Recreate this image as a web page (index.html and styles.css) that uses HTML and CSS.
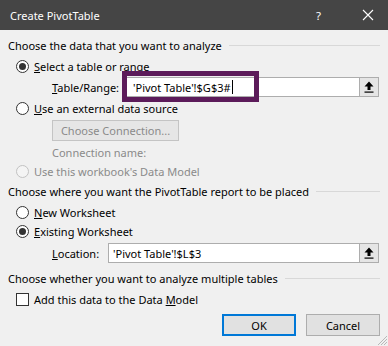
FILE: index.html
```html
<!DOCTYPE html>
<html>
<head>
<meta charset="utf-8">
<link rel="stylesheet" href="styles.css">
</head>
<body>
<div class="dialog">
  <div class="titlebar">
    <span class="title">Create PivotTable</span>
    <span class="help">?</span>
    <span class="close">
      <svg width="12" height="12" viewBox="0 0 12 12"><path d="M1 1L11 11M11 1L1 11" stroke="#fff" stroke-width="1.1" fill="none"/></svg>
    </span>
  </div>
  <div class="content">
    <div class="row header h1"><span>Choose the data that you want to analyze</span><span class="sep"></span></div>
    <div class="row radio-row r1"><span class="radio checked"></span><span><u>S</u>elect a table or range</span></div>
    <div class="row field-row tr">
      <span class="label range-label"><u>T</u>able/Range:</span>
      <div class="input range-input">
        <span class="value">'Pivot Table'!$G$3#<span class="caret"></span></span>
        <span class="picker"><svg width="10" height="12" viewBox="0 0 10 12"><path d="M5 0.5L9.5 5.5H6.5V9H3.5V5.5H0.5Z" fill="#000"/><rect x="0.5" y="10.5" width="9" height="1.2" fill="#000"/></svg></span>
        <span class="highlight"></span>
      </div>
    </div>
    <div class="row radio-row r2"><span class="radio"></span><span><u>U</u>se an external data source</span></div>
    <div class="row btn-row"><span class="conn-btn">Choose Connection...</span></div>
    <div class="row conn-name">Connection name:</div>
    <div class="row radio-row r3 disabled"><span class="radio"></span><span>Use this workbook's Data Model</span></div>
    <div class="row header h2"><span>Choose where you want the PivotTable report to be placed</span><span class="sep"></span></div>
    <div class="row radio-row r4"><span class="radio"></span><span><u>N</u>ew Worksheet</span></div>
    <div class="row radio-row r5"><span class="radio checked"></span><span><u>E</u>xisting Worksheet</span></div>
    <div class="row field-row loc">
      <span class="label loc-label"><u>L</u>ocation:</span>
      <div class="input loc-input">
        <span class="value">'Pivot Table'!$L$3</span>
        <span class="picker"><svg width="10" height="12" viewBox="0 0 10 12"><path d="M5 0.5L9.5 5.5H6.5V9H3.5V5.5H0.5Z" fill="#000"/><rect x="0.5" y="10.5" width="9" height="1.2" fill="#000"/></svg></span>
      </div>
    </div>
    <div class="row header h3"><span>Choose whether you want to analyze multiple tables</span><span class="sep"></span></div>
    <div class="row radio-row r6"><span class="checkbox"></span><span>Add this data to the Data <u>M</u>odel</span></div>
    <div class="row actions">
      <span class="btn ok">OK</span>
      <span class="btn cancel">Cancel</span>
    </div>
  </div>
  <svg class="grip" width="10" height="10" viewBox="0 0 10 10"><path d="M9 3L3 9M9 6L6 9M9 0L0 9" stroke="#b8b8b8" stroke-width="1" fill="none"/></svg>
</div>
</body>
</html>
```
FILE: styles.css
```css
html, body {
  margin: 0;
  padding: 0;
}
body {
  width: 388px;
  height: 346px;
  overflow: hidden;
  background: #f0f0f0;
  font-family: "Noto Sans", "Liberation Sans", sans-serif;
  font-size: 11px;
  color: #000;
}
.dialog {
  position: relative;
  width: 388px;
  height: 346px;
  background: #f0f0f0;
}
.titlebar {
  height: 30px;
  background: #454545;
  color: #fff;
  display: flex;
  align-items: center;
  padding-left: 10px;
  font-size: 11px;
}
.title {
  flex: 1;
}
.help {
  width: 10px;
  margin-right: 36px;
  font-size: 11.5px;
}
.close {
  width: 26px;
  display: flex;
  align-items: center;
}
.content {
  padding: 0 8px;
  display: flex;
  flex-direction: column;
}
.row {
  display: flex;
  align-items: center;
  height: 18px;
  white-space: nowrap;
}
.header .sep {
  flex: 1;
  height: 1px;
  background: #d8d8d8;
  margin-left: 7px;
}
.h1 { margin-top: 6px; }
.r1 { margin-top: 3px; }
.tr { margin-top: 2px; height: 20px; }
.r2 { margin-top: 2px; }
.btn-row { margin-top: 3px; height: 21px; padding-left: 44px; }
.conn-name { margin-top: 2px; padding-left: 44px; color: #8a8a8a; }
.r3 { margin-top: 1px; }
.h2 { margin-top: 2px; }
.r4 { margin-top: 3px; }
.r5 { margin-top: 1px; }
.loc { margin-top: 3px; height: 20px; }
.h3 { margin-top: 6px; }
.r6 { margin-top: 3px; }
.actions { margin-top: 6px; height: 22px; justify-content: flex-end; gap: 10px; }

.radio-row {
  padding-left: 8px;
}
.radio {
  width: 11px;
  height: 11px;
  border: 1px solid #333;
  border-radius: 50%;
  background: #fff;
  margin-right: 5px;
  position: relative;
  flex: none;
}
.radio.checked::after {
  content: "";
  position: absolute;
  left: 2px;
  top: 2px;
  width: 7px;
  height: 7px;
  border-radius: 50%;
  background: #333;
}
.disabled {
  color: #8a8a8a;
}
.disabled .radio {
  border-color: #c2c2c2;
  background: #f4f4f4;
}
.checkbox {
  width: 11px;
  height: 11px;
  border: 1px solid #333;
  background: #fff;
  margin-right: 5px;
  flex: none;
}
.field-row {
  padding-left: 44px;
}
.label {
  flex: none;
}
.range-label { width: 72px; }
.loc-label { width: 56px; }
.input {
  position: relative;
  height: 18px;
  border: 1px solid #adadad;
  background: #fff;
  display: flex;
  align-items: center;
  box-sizing: content-box;
}
.range-input {
  width: 253px;
}
.loc-input {
  width: 269px;
}
.value {
  flex: 1;
  padding-left: 8px;
  display: flex;
  align-items: center;
}
.loc-input .value {
  padding-left: 4px;
}
.caret {
  display: inline-block;
  width: 1px;
  height: 14px;
  background: #000;
  margin-left: 1px;
}
.picker {
  width: 19px;
  height: 18px;
  background: #e5e5e5;
  border-left: 1px solid #adadad;
  display: flex;
  align-items: center;
  justify-content: center;
  box-sizing: border-box;
}
.highlight {
  position: absolute;
  left: -3px;
  top: -7px;
  width: 127px;
  height: 21px;
  border: 5px solid #5c1b5a;
  pointer-events: none;
}
.conn-btn {
  height: 21px;
  width: 127px;
  box-sizing: border-box;
  border: 1px solid #c4c4c4;
  background: #e6e6e6;
  color: #8a8a8a;
  display: flex;
  align-items: center;
  justify-content: center;
}
.btn {
  width: 74px;
  height: 22px;
  box-sizing: border-box;
  background: #e1e1e1;
  border: 1px solid #adadad;
  display: flex;
  align-items: center;
  justify-content: center;
}
.btn.ok {
  border: 2px solid #0078d7;
}
.grip {
  position: absolute;
  right: 0;
  bottom: 0;
}
```
